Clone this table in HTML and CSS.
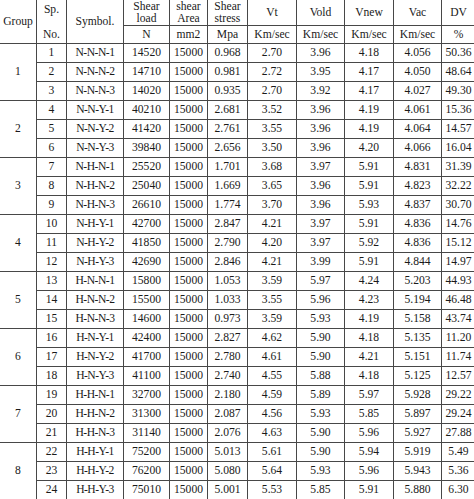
FILE: index.html
```html
<!DOCTYPE html>
<html>
<head>
<meta charset="utf-8">
<link rel="stylesheet" href="styles.css">
</head>
<body>
<div class="frame">
<table class="data">
<colgroup>
<col class="c-group"><col class="c-sp"><col class="c-sym"><col class="c-load"><col class="c-area"><col class="c-stress"><col class="c-v"><col class="c-v2"><col class="c-v"><col class="c-v2"><col class="c-dv">
</colgroup>
<thead>
<tr class="h1">
<th rowspan="2">Group</th>
<th class="sp-top">Sp.</th>
<th rowspan="2">Symbol.</th>
<th class="two">Shear<br>load</th>
<th class="two">shear<br>Area</th>
<th class="two">Shear<br>stress</th>
<th>Vt</th><th>Vold</th><th>Vnew</th><th>Vac</th><th>DV</th>
</tr>
<tr class="h2">
<th class="sp-bot">No.</th>
<th>N</th><th>mm2</th><th>Mpa</th><th>Km/sec</th><th>Km/sec</th><th>Km/sec</th><th>Km/sec</th><th>%</th>
</tr>
</thead>
<tbody>
<tr><td rowspan="3" class="grp">1</td><td>1</td><td class="sym">N-N-N-1</td><td>14520</td><td>15000</td><td>0.968</td><td>2.70</td><td>3.96</td><td>4.18</td><td>4.056</td><td>50.36</td></tr>
<tr><td>2</td><td class="sym">N-N-N-2</td><td>14710</td><td>15000</td><td>0.981</td><td>2.72</td><td>3.95</td><td>4.17</td><td>4.050</td><td>48.64</td></tr>
<tr><td>3</td><td class="sym">N-N-N-3</td><td>14020</td><td>15000</td><td>0.935</td><td>2.70</td><td>3.92</td><td>4.17</td><td>4.027</td><td>49.30</td></tr>
<tr><td rowspan="3" class="grp">2</td><td>4</td><td class="sym">N-N-Y-1</td><td>40210</td><td>15000</td><td>2.681</td><td>3.52</td><td>3.96</td><td>4.19</td><td>4.061</td><td>15.36</td></tr>
<tr><td>5</td><td class="sym">N-N-Y-2</td><td>41420</td><td>15000</td><td>2.761</td><td>3.55</td><td>3.96</td><td>4.19</td><td>4.064</td><td>14.57</td></tr>
<tr><td>6</td><td class="sym">N-N-Y-3</td><td>39840</td><td>15000</td><td>2.656</td><td>3.50</td><td>3.96</td><td>4.20</td><td>4.066</td><td>16.04</td></tr>
<tr><td rowspan="3" class="grp">3</td><td>7</td><td class="sym">N-H-N-1</td><td>25520</td><td>15000</td><td>1.701</td><td>3.68</td><td>3.97</td><td>5.91</td><td>4.831</td><td>31.39</td></tr>
<tr><td>8</td><td class="sym">N-H-N-2</td><td>25040</td><td>15000</td><td>1.669</td><td>3.65</td><td>3.96</td><td>5.91</td><td>4.823</td><td>32.22</td></tr>
<tr><td>9</td><td class="sym">N-H-N-3</td><td>26610</td><td>15000</td><td>1.774</td><td>3.70</td><td>3.96</td><td>5.93</td><td>4.837</td><td>30.70</td></tr>
<tr><td rowspan="3" class="grp">4</td><td>10</td><td class="sym">N-H-Y-1</td><td>42700</td><td>15000</td><td>2.847</td><td>4.21</td><td>3.97</td><td>5.91</td><td>4.836</td><td>14.76</td></tr>
<tr><td>11</td><td class="sym">N-H-Y-2</td><td>41850</td><td>15000</td><td>2.790</td><td>4.20</td><td>3.97</td><td>5.92</td><td>4.836</td><td>15.12</td></tr>
<tr><td>12</td><td class="sym">N-H-Y-3</td><td>42690</td><td>15000</td><td>2.846</td><td>4.21</td><td>3.99</td><td>5.91</td><td>4.844</td><td>14.97</td></tr>
<tr><td rowspan="3" class="grp">5</td><td>13</td><td class="sym">H-N-N-1</td><td>15800</td><td>15000</td><td>1.053</td><td>3.59</td><td>5.97</td><td>4.24</td><td>5.203</td><td>44.93</td></tr>
<tr><td>14</td><td class="sym">H-N-N-2</td><td>15500</td><td>15000</td><td>1.033</td><td>3.55</td><td>5.96</td><td>4.23</td><td>5.194</td><td>46.48</td></tr>
<tr><td>15</td><td class="sym">H-N-N-3</td><td>14600</td><td>15000</td><td>0.973</td><td>3.59</td><td>5.93</td><td>4.19</td><td>5.158</td><td>43.74</td></tr>
<tr><td rowspan="3" class="grp">6</td><td>16</td><td class="sym">H-N-Y-1</td><td>42400</td><td>15000</td><td>2.827</td><td>4.62</td><td>5.90</td><td>4.18</td><td>5.135</td><td>11.20</td></tr>
<tr><td>17</td><td class="sym">H-N-Y-2</td><td>41700</td><td>15000</td><td>2.780</td><td>4.61</td><td>5.90</td><td>4.21</td><td>5.151</td><td>11.74</td></tr>
<tr><td>18</td><td class="sym">H-N-Y-3</td><td>41100</td><td>15000</td><td>2.740</td><td>4.55</td><td>5.88</td><td>4.18</td><td>5.125</td><td>12.57</td></tr>
<tr><td rowspan="3" class="grp">7</td><td>19</td><td class="sym">H-H-N-1</td><td>32700</td><td>15000</td><td>2.180</td><td>4.59</td><td>5.89</td><td>5.97</td><td>5.928</td><td>29.22</td></tr>
<tr><td>20</td><td class="sym">H-H-N-2</td><td>31300</td><td>15000</td><td>2.087</td><td>4.56</td><td>5.93</td><td>5.85</td><td>5.897</td><td>29.24</td></tr>
<tr><td>21</td><td class="sym">H-H-N-3</td><td>31140</td><td>15000</td><td>2.076</td><td>4.63</td><td>5.90</td><td>5.96</td><td>5.927</td><td>27.88</td></tr>
<tr><td rowspan="3" class="grp">8</td><td>22</td><td class="sym">H-H-Y-1</td><td>75200</td><td>15000</td><td>5.013</td><td>5.61</td><td>5.90</td><td>5.94</td><td>5.919</td><td>5.49</td></tr>
<tr><td>23</td><td class="sym">H-H-Y-2</td><td>76200</td><td>15000</td><td>5.080</td><td>5.64</td><td>5.93</td><td>5.96</td><td>5.943</td><td>5.36</td></tr>
<tr><td>24</td><td class="sym">H-H-Y-3</td><td>75010</td><td>15000</td><td>5.001</td><td>5.53</td><td>5.85</td><td>5.91</td><td>5.880</td><td>6.30</td></tr>
</tbody>
</table>
</div>
</body>
</html>
```
FILE: styles.css
```css
html, body {
  margin: 0;
  padding: 0;
  background: #ffffff;
}

.frame {
  width: 474px;
  height: 499px;
  overflow: hidden;
  background: #ffffff;
}

.data {
  border-collapse: separate;
  border-spacing: 0;
  table-layout: fixed;
  width: 476px;
  font-family: "Liberation Serif", "Times New Roman", serif;
  font-size: 11.6px;
  color: #1a1a1a;
}

.c-group { width: 37px; }
.c-sp { width: 30px; }
.c-sym { width: 57px; }
.c-load { width: 46px; }
.c-area { width: 38px; }
.c-stress { width: 40px; }
.c-v { width: 49px; }
.c-v2 { width: 48px; }
.c-dv { width: 34px; }

.data th,
.data td {
  padding: 0;
  text-align: center;
  vertical-align: middle;
  font-weight: normal;
  white-space: nowrap;
  overflow: visible;
  border-right: 1px solid #474747;
  border-bottom: 1px solid #474747;
  line-height: 12px;
}

.h1 { height: 26px; }
.h2 { height: 18px; }
.data tbody tr { height: 19px; }

.data th.two {
  line-height: 11.5px;
}

.data th.sp-top {
  border-bottom: none;
  vertical-align: top;
  padding-top: 4px;
}

.data th.sp-bot {
  vertical-align: middle;
}

.sym {
  letter-spacing: -0.5px;
}
```
